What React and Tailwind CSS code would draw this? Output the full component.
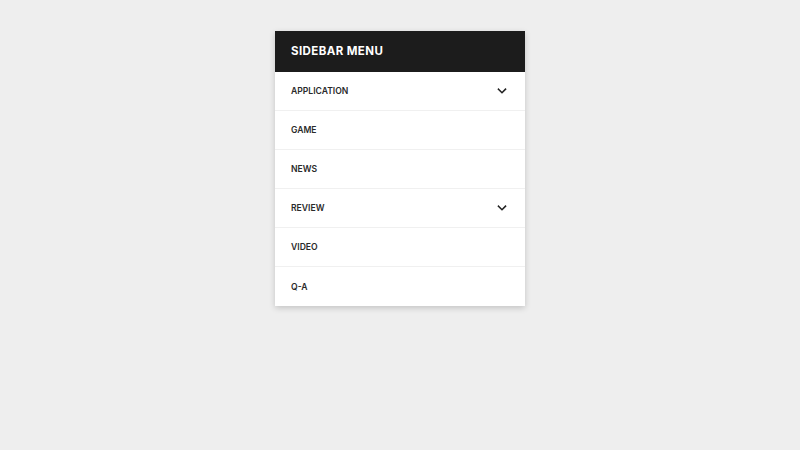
import React from "react";

const items = [
  { label: "APPLICATION", sub: true },
  { label: "GAME" },
  { label: "NEWS" },
  { label: "REVIEW", sub: true },
  { label: "VIDEO" },
  { label: "Q-A" },
];

function Chevron() {
  return (
    <svg width="10" height="10" viewBox="0 0 10 10" fill="none">
      <path d="M1.5 3.2 L5 6.7 L8.5 3.2" stroke="#222" strokeWidth="1.6" strokeLinecap="square" />
    </svg>
  );
}

export default function App() {
  return (
    <div className="w-[800px] h-[450px] bg-[#eeeeee] flex justify-center pt-[31px]" style={{ fontFamily: "Inter, 'Open Sans', sans-serif" }}>
      <div className="w-[250px] self-start bg-white shadow-[0_2px_6px_rgba(0,0,0,0.18)]">
        <div className="h-[41px] bg-[#1c1c1c] flex items-center px-4">
          <span className="text-white text-[11.5px] font-bold tracking-[0.4px]">SIDEBAR MENU</span>
        </div>
        {items.map((it, i) => (
          <div
            key={it.label}
            className={`h-[39px] flex items-center justify-between pl-4 pr-[18px] ${i < items.length - 1 ? "border-b border-[#f0f0f0]" : ""}`}
          >
            <span className="text-[8.6px] font-semibold text-[#2a2a2a] pt-px">{it.label}</span>
            {it.sub && <Chevron />}
          </div>
        ))}
      </div>
    </div>
  );
}
